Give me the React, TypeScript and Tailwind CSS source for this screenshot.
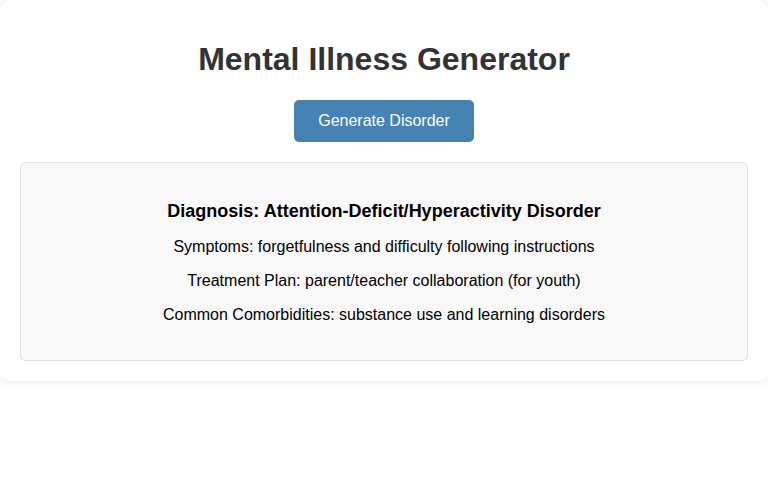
import React, { useState } from 'react';

const disorder = {
  name: 'Attention-Deficit/Hyperactivity Disorder',
  symptoms: 'forgetfulness and difficulty following instructions',
  treatment: 'parent/teacher collaboration (for youth)',
  comorbidities: 'substance use and learning disorders',
};

const App: React.FC = () => {
  const [current, setCurrent] = useState(disorder);

  return (
    <div className="min-h-screen bg-white font-['Liberation_Sans',Arial,sans-serif]">
      <div className="bg-white rounded-[10px] shadow-[0_0_10px_rgba(0,0,0,0.1)] p-5 text-center">
        <h1 className="mt-[21px] mb-[22px] text-[32px] leading-[37px] font-bold text-[#333]">
          Mental Illness Generator
        </h1>
        <button
          className="h-[42px] px-6 rounded-[5px] bg-[#4682b4] text-white text-base"
          onClick={() => setCurrent({ ...disorder })}
        >
          Generate Disorder
        </button>
        <div className="mt-5 bg-[#f9f9f9] border border-[#e3e3e3] rounded-[5px] p-5 text-black">
          <h3 className="mt-[17px] mb-[15px] text-[18px] leading-[22px] font-bold">
            Diagnosis: {current.name}
          </h3>
          <p className="my-4 text-base leading-[18px]">Symptoms: {current.symptoms}</p>
          <p className="my-4 text-base leading-[18px]">Treatment Plan: {current.treatment}</p>
          <p className="mt-4 mb-4 text-base leading-[18px]">Common Comorbidities: {current.comorbidities}</p>
        </div>
      </div>
    </div>
  );
};

export default App;
